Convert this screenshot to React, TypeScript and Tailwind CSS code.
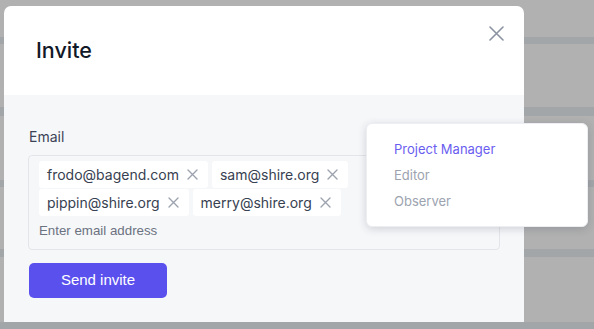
const emails = ['frodo@bagend.com', 'sam@shire.org', 'pippin@shire.org', 'merry@shire.org'];
const roles = ['Project Manager', 'Editor', 'Observer'];

function Cross({ size, stroke, className }: { size: number; stroke: number; className?: string }) {
  return (
    <svg width={size} height={size} viewBox={`0 0 ${size} ${size}`} className={className} fill="none">
      <path d={`M1 1L${size - 1} ${size - 1}M${size - 1} 1L1 ${size - 1}`} stroke="currentColor" strokeWidth={stroke} strokeLinecap="round" />
    </svg>
  );
}

function Backdrop() {
  return (
    <div className="flex flex-col">
      <div className="h-[37px]" />
      <div className="h-[7px] bg-[#a3a6a9]" />
      <div className="h-[63px]" />
      <div className="h-[9px] bg-[#a3a6a9]" />
      <div className="h-[64px]" />
      <div className="h-[7px] bg-[#a3a6a9]" />
      <div className="h-[62px]" />
      <div className="h-[8px] bg-[#a3a6a9]" />
      <div className="h-[65px]" />
      <div className="h-[7px] bg-[#a3a6a9]" />
    </div>
  );
}

export default function App() {
  return (
    <div className="relative h-[329px] w-[594px] overflow-hidden bg-[#b1b1b1] font-['Inter',sans-serif]">
      <Backdrop />

      <div className="absolute left-[4px] top-[6px] flex h-[316px] w-[520px] flex-col overflow-hidden rounded-t-[7px]">
        <div className="relative flex h-[89px] items-center bg-white pl-8">
          <h1 className="text-[21.5px] font-medium text-[#111827]">Invite</h1>
          <button className="absolute right-[20px] top-[20px] text-[#8b93a1]">
            <Cross size={15} stroke={1.6} />
          </button>
        </div>

        <div className="flex flex-1 flex-col bg-[#f6f7f9] px-6 pt-8">
          <label className="ml-px text-[14px] leading-5 text-[#3b4456]">Email</label>
          <div className="mt-2 rounded-[4px] border border-[#e3e5e9] pb-[9px] pl-[10px] pr-2 pt-[5px]">
            <div className="flex flex-wrap gap-x-1 gap-y-px">
              {emails.map((e) => (
                <div
                  key={e}
                  className="flex h-[27px] items-center gap-2 rounded-[3px] bg-white pl-2 pr-[10px] text-[14px] text-[#374151]"
                >
                  <span>{e}</span>
                  <Cross size={11} stroke={1.4} className="text-[#9ca3af]" />
                </div>
              ))}
            </div>
            <div className="mt-[6px] font-['Liberation_Sans',sans-serif] text-[13.3px] leading-[18px] text-[#6b7280]">
              Enter email address
            </div>
          </div>
          <button className="ml-px mt-[13px] h-[35px] w-[138px] rounded-[5px] bg-[#5a50ee] font-['Liberation_Sans',sans-serif] text-[15px] text-white">
            Send invite
          </button>
        </div>
      </div>

      <div className="absolute left-[366px] top-[123px] h-[104px] w-[222px] rounded-[6px] border border-[#eceef1] bg-white pt-[12px] shadow-[0_2px_8px_rgba(30,40,60,0.18)]">
        {roles.map((r, i) => (
          <div
            key={r}
            className={`pl-[27px] text-[13px] leading-[26px] ${i === 0 ? 'text-[#6a5ef0]' : 'text-[#9ca3af]'}`}
          >
            {r}
          </div>
        ))}
      </div>
    </div>
  );
}
